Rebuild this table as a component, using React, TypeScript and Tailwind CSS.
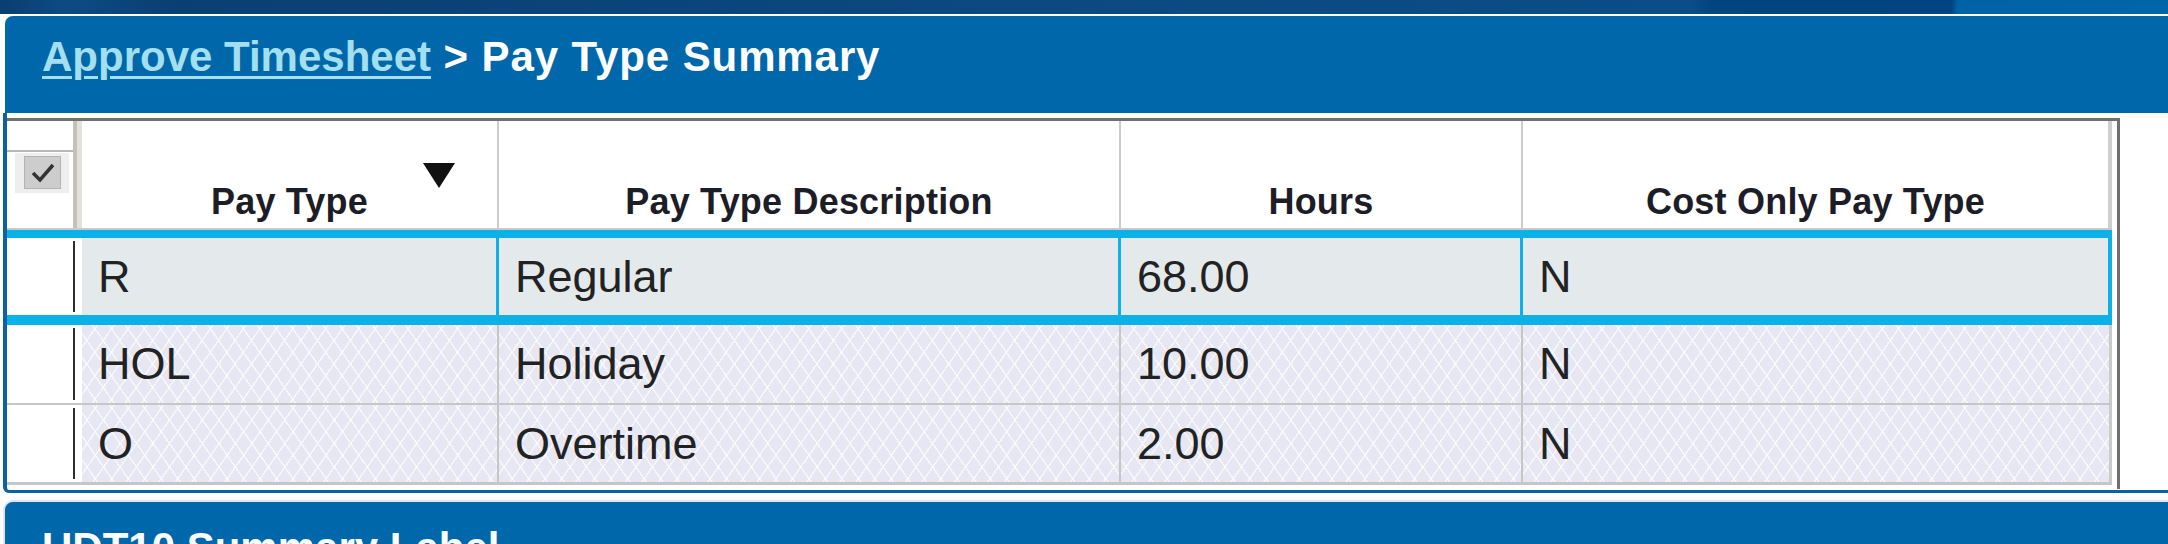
import React from "react";

type Row = { code: string; desc: string; hours: string; cost: string; selected?: boolean };

const rows: Row[] = [
  { code: "R", desc: "Regular", hours: "68.00", cost: "N", selected: true },
  { code: "HOL", desc: "Holiday", hours: "10.00", cost: "N" },
  { code: "O", desc: "Overtime", hours: "2.00", cost: "N" },
];

function HeaderCell({ label, width, last, sort }: { label: string; width: string; last?: boolean; sort?: boolean }) {
  return (
    <div
      className={`relative flex items-end justify-center pb-[5px] ${width} ${
        last ? "border-r-[4px] border-[#cfcfcf]" : "border-r-2 border-[#cbcbcb]"
      } text-[36px] leading-[42px] font-bold text-[#1d1d27] tracking-[0.2px]`}
    >
      {label}
      {sort && (
        <svg className="absolute right-[42px] top-[42px]" width="32" height="25" viewBox="0 0 32 25">
          <polygon points="0,0 32,0 16,25" fill="#111111" />
        </svg>
      )}
    </div>
  );
}

function DataRow({ row, last }: { row: Row; last?: boolean }) {
  const sel = !!row.selected;
  const rowCls = sel
    ? "h-[95px] border-t-[8px] border-b-[10px] border-[#0cb1e7]"
    : last
    ? "h-[80px] border-b-[3px] border-[#c6c6c6]"
    : "h-[80px] border-b-2 border-[#c6c6c6]";
  const cellBase = "flex items-center pl-[16px] text-[45px] leading-[52px] text-[#222222]";
  const cellBg = sel
    ? "bg-[#e4e9ec]"
    : "bg-[#e7e7f4] bg-[repeating-linear-gradient(55deg,transparent_0px,transparent_12px,rgba(255,255,255,0.65)_12px,rgba(255,255,255,0.65)_13.5px),repeating-linear-gradient(125deg,transparent_0px,transparent_12px,rgba(255,255,255,0.65)_12px,rgba(255,255,255,0.65)_13.5px)]";
  const div = sel ? "border-r-[3px] border-[#0cb1e7]" : "border-r-2 border-[#c6c6c6]";
  const lastDiv = sel ? "border-r-[4px] border-[#0cb1e7]" : "border-r-[3px] border-[#cacaca]";
  return (
    <div className={`flex ${rowCls}`}>
      <div className="w-[66px] bg-white" />
      <div className="w-[9px] bg-white flex py-[3px]">
        <div className="w-[2px] bg-[#2e2e2e]" />
      </div>
      <div className={`${cellBase} ${cellBg} ${div} w-[417px]`}>{row.code}</div>
      <div className={`${cellBase} ${cellBg} ${div} w-[622px]`}>{row.desc}</div>
      <div className={`${cellBase} ${cellBg} ${div} w-[402px]`}>{row.hours}</div>
      <div className={`${cellBase} ${cellBg} ${lastDiv} w-[589px]`}>{row.cost}</div>
    </div>
  );
}

export default function App() {
  return (
    <div className="w-[2168px] h-[544px] overflow-hidden bg-white font-['Liberation_Sans',Arial,sans-serif]">
      <div className="h-[14px] bg-[linear-gradient(90deg,#0b3e72_0%,#0d4a84_3%,#0a3f74_8%,#0c4a84_55%,#0a4d88_78%,#00457f_79%,#004380_90%,#0063a5_90.3%,#0066a8_100%)]" />

      <div className="ml-[3px]">
        <div className="h-[99px] border-t-2 border-l-2 border-white rounded-tl-[10px] bg-[#0068aa] pl-[37px] pt-[17px] text-[42px] leading-[48px] font-bold text-white whitespace-nowrap">
          <a className="text-[#a3dfee] underline decoration-[3px] underline-offset-[5px]">Approve Timesheet</a>
          <span className="tracking-[0.9px]">{" > Pay Type Summary"}</span>
        </div>

        <div className="border-l-4 border-b-[3px] border-[#0a62a0] rounded-bl-[6px] pt-[5px] pb-[1px]">
          <div className="w-[2113px] border-t-[3px] border-r-[3px] border-[#6f6f6f] pr-[5px] pb-[4px]">
            <div className="flex h-[109px] border-b-2 border-[#c9c9c9]">
              <div className="relative w-[66px]">
                <div className="absolute left-0 right-0 top-[29px] h-[2px] bg-[#b8b8b8]" />
                <div className="absolute left-[8px] top-[32px] w-[54px] h-[40px] bg-[#eeeeee]" />
                <div className="absolute left-[17px] top-[35px] w-[37px] h-[33px] bg-[#cdcdcd] border border-[#b3b3b3] flex items-center justify-center">
                  <svg width="28" height="24" viewBox="0 0 28 24">
                    <path d="M4 12 L11 19 L24 4" fill="none" stroke="#333333" strokeWidth="3.5" />
                  </svg>
                </div>
              </div>
              <div className="w-[9px] border-l-4 border-[#c3c2ba] bg-[#e3e1d9]" />
              <HeaderCell label="Pay Type" width="w-[417px]" sort />
              <HeaderCell label="Pay Type Description" width="w-[622px]" />
              <HeaderCell label="Hours" width="w-[402px]" />
              <HeaderCell label="Cost Only Pay Type" width="w-[589px]" last />
            </div>
            {rows.map((r, i) => (
              <DataRow key={r.code} row={r} last={i === rows.length - 1} />
            ))}
          </div>
        </div>
      </div>

      <div className="ml-[3px] mt-[7px] h-[100px] border-t-2 border-l-2 border-[#dbe8f2] rounded-tl-[10px] bg-[#0068aa] pl-[37px] pt-[22px] text-[42px] leading-[48px] font-bold text-white whitespace-nowrap">
        UDT10 Summary Label
      </div>
    </div>
  );
}
